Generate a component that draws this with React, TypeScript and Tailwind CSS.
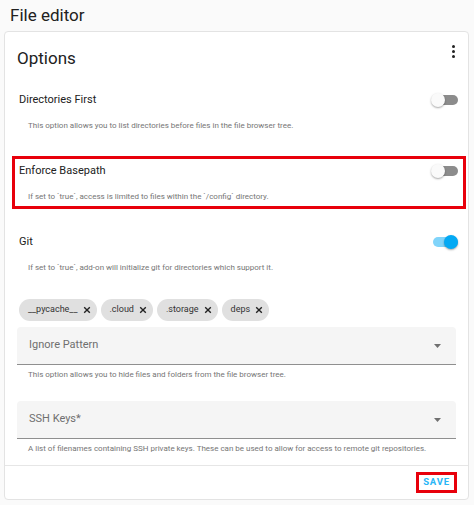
import { useState } from 'react';

function Toggle({ on }: { on: boolean }) {
  return (
    <div className="relative w-[27px] h-[14px] shrink-0">
      <div
        className={`absolute left-[2px] right-0 top-[2px] h-[10px] rounded-full ${on ? 'bg-[#80d4fa]' : 'bg-[#8c8c8c]'}`}
      />
      <div
        className={`absolute top-0 w-[14px] h-[14px] rounded-full shadow-[0_1px_2px_rgba(0,0,0,0.35)] ${on ? 'right-0 bg-[#03a9f4]' : 'left-0 bg-[#fafafa]'}`}
      />
    </div>
  );
}

function OptionRow({
  title,
  desc,
  on,
  highlight,
}: {
  title: string;
  desc: string;
  on: boolean;
  highlight?: boolean;
}) {
  return (
    <div
      className={`ml-[7px] mr-[2px] h-[53px] border-[3px] pl-[4px] pr-[5px] pt-[4px] ${highlight ? 'border-[#e8000b]' : 'border-transparent'}`}
    >
      <div className="flex items-center justify-between h-[16px]">
        <span className="text-[11px] text-[#212121]">{title}</span>
        <Toggle on={on} />
      </div>
      <p className="mt-[12px] pl-[9px] text-[8px] leading-[12px] text-[#757575]">{desc}</p>
    </div>
  );
}

function Chip({ label }: { label: string }) {
  return (
    <div className="flex items-center h-[22px] rounded-full bg-[#e0e0e0] pl-[9px] pr-[6px] gap-[5px]">
      <span className="text-[9px] text-[#333]">{label}</span>
      <svg width="8" height="8" viewBox="0 0 10 10">
        <path d="M1.5 1.5L8.5 8.5M8.5 1.5L1.5 8.5" stroke="#222" strokeWidth="1.7" />
      </svg>
    </div>
  );
}

function SelectField({ label }: { label: string }) {
  return (
    <div className="mx-[12px] h-[38px] flex items-center justify-between bg-[#f5f5f5] rounded-t-[4px] border-b border-[#8f8f8f] pl-[12px] pr-[15px]">
      <span className="text-[11px] text-[#6f6f6f]">{label}</span>
      <svg width="7" height="4" viewBox="0 0 7 4">
        <path d="M0 0H7L3.5 4Z" fill="#707070" />
      </svg>
    </div>
  );
}

export default function App() {
  const [chips] = useState(['__pycache__', '.cloud', '.storage', 'deps']);

  return (
    <div className="w-[474px] h-[505px] bg-[#fafafa] font-['Roboto',sans-serif] overflow-hidden">
      {/* Header */}
      <div className="h-[31px] pl-[10px] flex items-center">
        <h1 className="text-[17px] text-[#212121] leading-none">File editor</h1>
      </div>

      {/* Card */}
      <div className="ml-[4px] w-[465px] h-[469px] bg-white border border-[#e3e3e3] rounded-[4px] flex flex-col">
        <div className="h-[53px] flex items-start justify-between pl-[12px] pr-[13px]">
          <h2 className="mt-[16px] text-[17px] leading-[20px] text-[#212121]">Options</h2>
          <div className="mt-[13px] flex flex-col gap-[2px] items-center">
            <span className="w-[3px] h-[3px] rounded-full bg-[#222]" />
            <span className="w-[3px] h-[3px] rounded-full bg-[#222]" />
            <span className="w-[3px] h-[3px] rounded-full bg-[#222]" />
          </div>
        </div>

        <div className="flex flex-col gap-[18px]">
          <OptionRow
            title="Directories First"
            desc="This option allows you to list directories before files in the file browser tree."
            on={false}
          />
          <OptionRow
            title="Enforce Basepath"
            desc="If set to `true`, access is limited to files within the `/config` directory."
            on={false}
            highlight
          />
          <OptionRow
            title="Git"
            desc="If set to `true`, add-on will initialize git for directories which support it."
            on={true}
          />
        </div>

        <div className="mt-[19px] pl-[14px] flex gap-[4px]">
          {chips.map((c) => (
            <Chip key={c} label={c} />
          ))}
        </div>

        <div className="mt-[6px]">
          <SelectField label="Ignore Pattern" />
          <p className="pl-[23px] mt-[4px] text-[8px] leading-[12px] text-[#757575]">
            This option allows you to hide files and folders from the file browser tree.
          </p>
        </div>

        <div className="mt-[20px]">
          <SelectField label="SSH Keys*" />
          <p className="pl-[23px] mt-[4px] text-[8px] leading-[12px] text-[#757575]">
            A list of filenames containing SSH private keys. These can be used to allow for access to remote git repositories.
          </p>
        </div>

        <div className="mt-[10px] border-t border-[#e6e6e6] flex-1 flex justify-end items-start pr-[11px] pt-[6px]">
          <button
            type="button"
            className="w-[41px] h-[21px] border-[3px] border-[#e8000b] flex items-center justify-center text-[9.5px] font-bold tracking-[0.8px] text-[#29b6f6]"
          >
            SAVE
          </button>
        </div>
      </div>
    </div>
  );
}
